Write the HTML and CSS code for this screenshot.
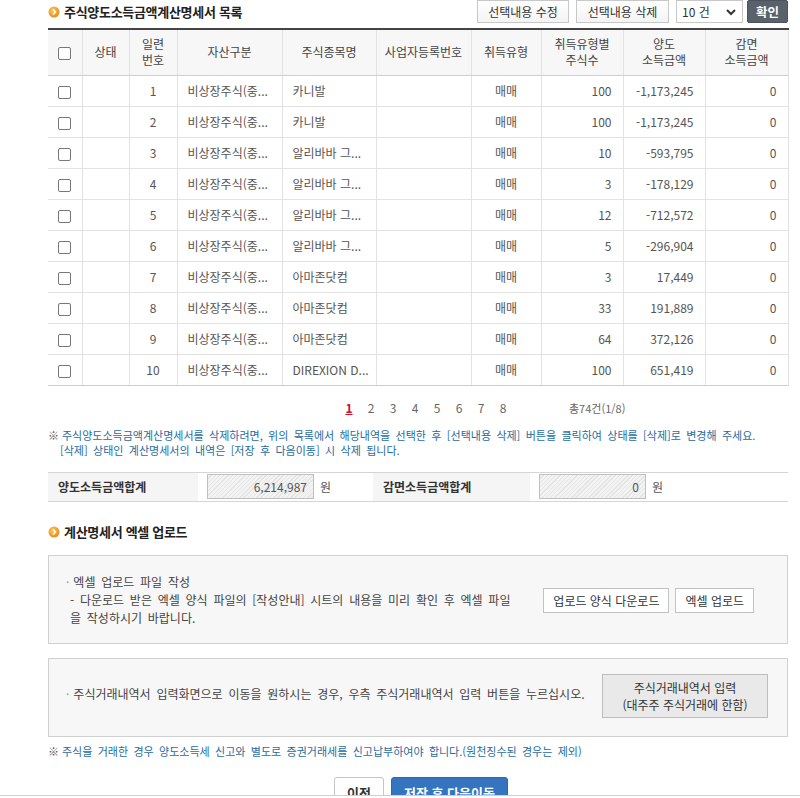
FILE: index.html
```html
<!DOCTYPE html>
<html lang="ko">
<head>
<meta charset="utf-8">
<title>주식양도소득금액계산명세서 목록</title>
<link rel="stylesheet" href="styles.css">
</head>
<body>
<div class="page">
  <div class="top">
    <h2 class="title"><svg class="ico" viewBox="0 0 12 12" width="12" height="12"><defs><radialGradient id="g1" cx="0.4" cy="0.35" r="0.7"><stop offset="0" stop-color="#ffc55a"/><stop offset="1" stop-color="#e58a12"/></radialGradient></defs><circle cx="6" cy="6" r="5.5" fill="url(#g1)"/><path d="M5 3.4 L7.4 6 L5 8.6" fill="none" stroke="#fff" stroke-width="1.6"/></svg>주식양도소득금액계산명세서 목록</h2>
    <div class="tools">
      <button class="btn">선택내용 수정</button>
      <button class="btn">선택내용 삭제</button>
      <div class="select"><span>10 건</span><svg viewBox="0 0 10 8" width="10" height="8"><path d="M1 2 L5 6 L9 2" fill="none" stroke="#333" stroke-width="2"/></svg></div>
      <button class="btn dark">확인</button>
    </div>
  </div>

  <table class="grid">
    <colgroup>
      <col class="c1"><col class="c2"><col class="c3"><col class="c4"><col class="c5"><col class="c6"><col class="c7"><col class="c8"><col class="c9"><col class="c10">
    </colgroup>
    <thead>
      <tr>
        <th><input type="checkbox" class="chk"></th>
        <th>상태</th>
        <th>일련<br>번호</th>
        <th>자산구분</th>
        <th>주식종목명</th>
        <th>사업자등록번호</th>
        <th>취득유형</th>
        <th>취득유형별<br>주식수</th>
        <th>양도<br>소득금액</th>
        <th>감면<br>소득금액</th>
      </tr>
    </thead>
    <tbody>
      <tr><td class="ctr"><input type="checkbox" class="chk"></td><td></td><td class="ctr">1</td><td class="lft">비상장주식(중...</td><td class="lft">카니발</td><td></td><td class="ctr">매매</td><td class="rgt">100</td><td class="rgt">-1,173,245</td><td class="rgt">0</td></tr>
      <tr><td class="ctr"><input type="checkbox" class="chk"></td><td></td><td class="ctr">2</td><td class="lft">비상장주식(중...</td><td class="lft">카니발</td><td></td><td class="ctr">매매</td><td class="rgt">100</td><td class="rgt">-1,173,245</td><td class="rgt">0</td></tr>
      <tr><td class="ctr"><input type="checkbox" class="chk"></td><td></td><td class="ctr">3</td><td class="lft">비상장주식(중...</td><td class="lft">알리바바 그...</td><td></td><td class="ctr">매매</td><td class="rgt">10</td><td class="rgt">-593,795</td><td class="rgt">0</td></tr>
      <tr><td class="ctr"><input type="checkbox" class="chk"></td><td></td><td class="ctr">4</td><td class="lft">비상장주식(중...</td><td class="lft">알리바바 그...</td><td></td><td class="ctr">매매</td><td class="rgt">3</td><td class="rgt">-178,129</td><td class="rgt">0</td></tr>
      <tr><td class="ctr"><input type="checkbox" class="chk"></td><td></td><td class="ctr">5</td><td class="lft">비상장주식(중...</td><td class="lft">알리바바 그...</td><td></td><td class="ctr">매매</td><td class="rgt">12</td><td class="rgt">-712,572</td><td class="rgt">0</td></tr>
      <tr><td class="ctr"><input type="checkbox" class="chk"></td><td></td><td class="ctr">6</td><td class="lft">비상장주식(중...</td><td class="lft">알리바바 그...</td><td></td><td class="ctr">매매</td><td class="rgt">5</td><td class="rgt">-296,904</td><td class="rgt">0</td></tr>
      <tr><td class="ctr"><input type="checkbox" class="chk"></td><td></td><td class="ctr">7</td><td class="lft">비상장주식(중...</td><td class="lft">아마존닷컴</td><td></td><td class="ctr">매매</td><td class="rgt">3</td><td class="rgt">17,449</td><td class="rgt">0</td></tr>
      <tr><td class="ctr"><input type="checkbox" class="chk"></td><td></td><td class="ctr">8</td><td class="lft">비상장주식(중...</td><td class="lft">아마존닷컴</td><td></td><td class="ctr">매매</td><td class="rgt">33</td><td class="rgt">191,889</td><td class="rgt">0</td></tr>
      <tr><td class="ctr"><input type="checkbox" class="chk"></td><td></td><td class="ctr">9</td><td class="lft">비상장주식(중...</td><td class="lft">아마존닷컴</td><td></td><td class="ctr">매매</td><td class="rgt">64</td><td class="rgt">372,126</td><td class="rgt">0</td></tr>
      <tr><td class="ctr"><input type="checkbox" class="chk"></td><td></td><td class="ctr">10</td><td class="lft">비상장주식(중...</td><td class="lft">DIREXION D...</td><td></td><td class="ctr">매매</td><td class="rgt">100</td><td class="rgt">651,419</td><td class="rgt">0</td></tr>
    </tbody>
  </table>

  <div class="paging">
    <div class="pages"><a class="on">1</a><a>2</a><a>3</a><a>4</a><a>5</a><a>6</a><a>7</a><a>8</a></div>
    <div class="total">총74건(1/8)</div>
  </div>

  <div class="note">
    <p><span class="mark">※</span>주식양도소득금액계산명세서를 삭제하려면, 위의 목록에서 해당내역을 선택한 후 [선택내용 삭제] 버튼을 클릭하여 상태를 [삭제]로 변경해 주세요.</p>
    <p class="ind">[삭제] 상태인 계산명세서의 내역은 [저장 후 다음이동] 시 삭제 됩니다.</p>
  </div>

  <div class="sum">
    <div class="lbl">양도소득금액합계</div>
    <div class="val"><span class="inp">6,214,987</span><span class="won">원</span></div>
    <div class="lbl">감면소득금액합계</div>
    <div class="val"><span class="inp">0</span><span class="won">원</span></div>
  </div>

  <h2 class="title sec"><svg class="ico" viewBox="0 0 12 12" width="12" height="12"><defs><radialGradient id="g2" cx="0.4" cy="0.35" r="0.7"><stop offset="0" stop-color="#ffc55a"/><stop offset="1" stop-color="#e58a12"/></radialGradient></defs><circle cx="6" cy="6" r="5.5" fill="url(#g2)"/><path d="M5 3.4 L7.4 6 L5 8.6" fill="none" stroke="#fff" stroke-width="1.6"/></svg>계산명세서 엑셀 업로드</h2>

  <div class="box box1">
    <div class="txt">
      <p><span class="dot">·</span>엑셀 업로드 파일 작성</p>
      <p class="sub">- 다운로드 받은 엑셀 양식 파일의 [작성안내] 시트의 내용을 미리 확인 후 엑셀 파일<br>을 작성하시기 바랍니다.</p>
    </div>
    <div class="acts">
      <button class="btn">업로드 양식 다운로드</button>
      <button class="btn">엑셀 업로드</button>
    </div>
  </div>

  <div class="box box2">
    <div class="txt">
      <p><span class="dot">·</span>주식거래내역서 입력화면으로 이동을 원하시는 경우, 우측 주식거래내역서 입력 버튼을 누르십시오.</p>
    </div>
    <button class="btn big">주식거래내역서 입력<br>(대주주 주식거래에 한함)</button>
  </div>

  <p class="note note2"><span class="mark">※</span>주식을 거래한 경우 양도소득세 신고와 별도로 증권거래세를 신고납부하여야 합니다.(원천징수된 경우는 제외)</p>

  <div class="bottom">
    <button class="bbtn">이전</button>
    <button class="bbtn blue">저장 후 다음이동</button>
  </div>
</div>
<div class="footer"></div>
</body>
</html>
```

FILE: styles.css
```css
* { box-sizing: border-box; }
html, body { margin: 0; padding: 0; background: #fff; }
body {
  font-family: "Noto Sans CJK KR", "Noto Sans", sans-serif;
  font-size: 12px;
  color: #444;
  overflow: hidden;
  height: 798px;
}
p { margin: 0; }
.page { margin-left: 48px; width: 740px; }

.top { display: flex; justify-content: space-between; align-items: flex-start; height: 28px; }
.title { display: flex; align-items: center; margin: 0; font-size: 13px; font-weight: bold; color: #222; line-height: 20px; padding-top: 2px; letter-spacing: -0.3px; }
.ico { margin-right: 4px; flex: none; }
.tools { display: flex; align-items: center; gap: 0; padding-right: 0; }
.btn {
  font-family: inherit; font-size: 12px; color: #333;
  height: 23px; padding: 0 8px; border: 1px solid #c8c8c8; background: linear-gradient(#fff, #f4f4f4);
  cursor: pointer; line-height: 21px; white-space: nowrap;
}
.tools .btn { margin-left: 7px; width: 93px; padding: 0; }
.tools .btn:first-child { margin-left: 0; width: 92px; }
.tools .btn.dark { width: 41px; margin-left: 4px; background: #59616b; border-color: #4c535c; color: #fff; font-weight: bold; border-radius: 2px; font-size: 12.5px; }
.select {
  display: flex; align-items: center; justify-content: space-between;
  width: 67px; height: 23px; margin-left: 7px; padding: 0 6px 0 5px;
  border: 1px solid #c8c8c8; background: #fff; color: #333; font-size: 12px;
}

.grid { width: 740px; border-collapse: collapse; table-layout: fixed; border-top: 2px solid #444; }
.c1 { width: 34px; } .c2 { width: 47px; } .c3 { width: 48px; } .c4 { width: 105px; } .c5 { width: 94px; }
.c6 { width: 95px; } .c7 { width: 70px; } .c8 { width: 82px; } .c9 { width: 82px; } .c10 { width: 83px; }
.grid th {
  height: 46px; background: #f7f7f7; font-weight: normal; color: #444; font-size: 12px; line-height: 16px;
  border-left: 1px solid #e2e2e2; border-bottom: 1px solid #cfcfcf; padding: 0 2px;
}
.grid td {
  height: 31px; color: #555; font-size: 12px; padding: 0;
  border-left: 1px solid #e2e2e2; border-bottom: 1px solid #e2e2e2; white-space: nowrap; overflow: hidden;
}
.grid th:first-child, .grid td:first-child { border-left: none; }
.grid th:last-child, .grid td:last-child { border-right: 1px solid #e2e2e2; }
.grid tbody tr:last-child td { border-bottom: 1px solid #cfcfcf; }
.ctr { text-align: center; }
.lft { text-align: left; padding-left: 10px !important; }
.rgt { text-align: right; padding-right: 11px !important; }
.chk {
  appearance: none; -webkit-appearance: none; width: 13px; height: 13px; margin: 0; vertical-align: middle;
  border: 1px solid #777; border-radius: 2px; background: #fff; display: inline-block;
}

.paging { display: flex; align-items: center; height: 42px; padding-top: 2px; }
.pages { display: flex; margin-left: 290px; }
.pages a { display: inline-block; width: 22px; text-align: center; color: #666; font-size: 12px; }
.pages a.on { color: #c8102e; font-weight: bold; text-decoration: underline; }
.total { margin-left: 55px; color: #666; font-size: 11px; }

.note { color: #1f6c9e; font-size: 11px; line-height: 15px; word-spacing: 2.3px; }
.note .mark { color: #555; margin-right: 3px; }
.note .ind { padding-left: 12px; }

.sum {
  display: grid; grid-template-columns: 150px 175px 157px 1fr; height: 30px; margin-top: 14px;
  border-top: 1px solid #d5d5d5; border-bottom: 1px solid #d5d5d5; align-items: stretch;
}
.sum .lbl { background: #f5f5f5; font-weight: bold; color: #333; padding-left: 10px; display: flex; align-items: center; font-size: 12px; }
.sum .val { display: flex; align-items: center; padding-left: 9px; }
.inp {
  display: inline-block; width: 107px; height: 25px; line-height: 23px; text-align: right; padding-right: 6px;
  border: 1px solid #c0c0c0; color: #555;
  background: repeating-linear-gradient(135deg, #f3f3f3 0 2px, #e4e4e4 2px 3px);
}
.won { margin-left: 6px; color: #555; }

.title.sec { margin-top: 18px; }

.box { display: flex; align-items: center; justify-content: space-between; background: #f7f7f7; border: 1px solid #d0d0d0; }
.box1 { margin-top: 13px; height: 89px; padding: 0 33px 0 17px; }
.box2 { margin-top: 14px; height: 79px; padding: 0 19px 0 17px; }
.box .txt { color: #444; font-size: 12px; line-height: 18px; word-spacing: 2.4px; }
.box1 .txt { width: 470px; padding-top: 2px; }
.dot { color: #999; margin-right: 4px; }
.sub { padding-left: 4px; }
.acts { display: flex; gap: 6px; margin-top: 2px; }
.acts .btn { height: 25px; padding: 0 9px; background: #fff; border-color: #c2c2c2; }
.btn.big { height: 44px; width: 166px; line-height: 17px; background: #e9e9e9; border-color: #bdbdbd; color: #333; margin-bottom: 2px; }
.box2 .txt { margin-top: -6px; }

.note2 { margin-top: 7px; }

.bottom { display: flex; justify-content: center; gap: 7px; margin-top: 18px; padding-left: 6px; }
.bbtn {
  font-family: inherit; font-size: 13px; font-weight: bold; height: 32px; border-radius: 3px;
  border: 1px solid #c5c5c5; background: #fff; color: #333; padding: 0 12px;
}
.bbtn.blue { background: #3575bf; border-color: #2e69ad; color: #fff; width: 117px; }

.footer { position: fixed; left: 0; right: 0; bottom: 0; height: 3px; background: #fff; border-top: 1px solid #d0d0d0; }
```
